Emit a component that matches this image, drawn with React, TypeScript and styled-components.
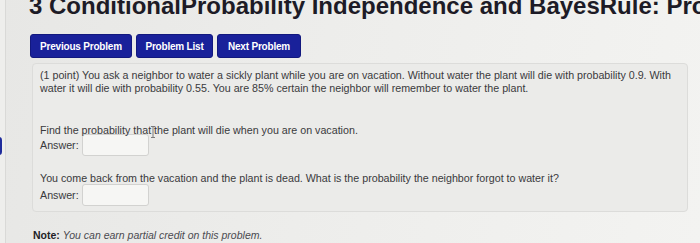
import React from "react";
import styled, { createGlobalStyle } from "styled-components";

const Global = createGlobalStyle`
  html, body { margin: 0; padding: 0; }
  body {
    width: 700px;
    height: 243px;
    overflow: hidden;
    font-family: "Liberation Sans", Arial, sans-serif;
    background: linear-gradient(100deg, #e7e7e5 0%, #ededeb 45%, #f3f3f1 100%);
  }
`;

const Page = styled.div`
  display: flex;
  width: 700px;
  height: 243px;
  overflow: hidden;
  position: relative;
`;

const Sidebar = styled.div`
  width: 6px;
  flex: none;
  border-right: 1px solid #d9d9d7;
  background: #eeeeec;
  padding-top: 137px;
  box-sizing: border-box;
`;

const SideTab = styled.div`
  width: 3px;
  height: 18px;
  margin-left: -1px;
  background: #1f2c9c;
  border-radius: 0 3px 3px 0;
`;

const Main = styled.div`
  flex: 1;
  padding-left: 23px;
  min-width: 0;
`;

const Title = styled.h1`
  margin: -7px 0 0 0;
  font-size: 24px;
  line-height: 25px;
  font-weight: 700;
  color: #1d1b26;
  white-space: nowrap;
`;

const ButtonRow = styled.div`
  display: flex;
  gap: 4px;
  margin-top: 16px;
  margin-left: 1px;
`;

const NavButton = styled.button<{ $w: number }>`
  width: ${(p) => p.$w}px;
  height: 24px;
  padding: 0;
  background: #19219a;
  color: #ffffff;
  border: 1px solid #12187e;
  border-radius: 3px;
  font-family: "Liberation Sans", Arial, sans-serif;
  font-size: 10px;
  font-weight: 700;
  letter-spacing: -0.2px;
`;

const Panel = styled.div`
  margin-top: 5px;
  margin-left: 3px;
  width: 656px;
  box-sizing: border-box;
  padding: 5px 7px 5px 7px;
  background: #ebebe9;
  border: 1px solid #dcdcda;
  border-radius: 4px;
  color: #3a3a3c;
  font-size: 10.7px;
  line-height: 13px;
  white-space: nowrap;
`;

const Para = styled.p<{ $top: number }>`
  position: relative;
  z-index: 1;
  margin: ${(p) => p.$top}px 0 0 0;
`;

const AnswerRow = styled.div<{ $top: number }>`
  display: flex;
  align-items: center;
  gap: 3px;
  margin-top: ${(p) => p.$top}px;
`;

const AnswerBox = styled.div`
  width: 67px;
  height: 22px;
  box-sizing: border-box;
  background: #f6f6f4;
  border: 1px solid #d2d2d0;
  border-radius: 3px;
`;

const Cursor = styled.svg`
  position: absolute;
  left: 150px;
  top: 126px;
  z-index: 2;
`;

const Note = styled.div`
  margin-top: 17px;
  margin-left: 4px;
  font-size: 10.5px;
  line-height: 13px;
  color: #222226;
  white-space: nowrap;
  b { font-weight: 700; }
  i { color: #4a4a50; }
`;

export default function App() {
  return (
    <>
      <Global />
      <Page>
        <Sidebar>
          <SideTab />
        </Sidebar>
        <Main>
          <Title>3 ConditionalProbability Independence and BayesRule: Problem 3</Title>
          <ButtonRow>
            <NavButton $w={102}>Previous Problem</NavButton>
            <NavButton $w={77}>Problem List</NavButton>
            <NavButton $w={84}>Next Problem</NavButton>
          </ButtonRow>
          <Panel>
            <Para $top={0}>
              (1 point) You ask a neighbor to water a sickly plant while you are on vacation. Without water the plant will die with probability 0.9. With
              <br />
              water it will die with probability 0.55. You are 85% certain the neighbor will remember to water the plant.
            </Para>
            <Para $top={29}>Find the probability that the plant will die when you are on vacation.</Para>
            <AnswerRow $top={-3}>
              <span>Answer:</span>
              <AnswerBox />
            </AnswerRow>
            <Para $top={16}>You come back from the vacation and the plant is dead. What is the probability the neighbor forgot to water it?</Para>
            <AnswerRow $top={-1}>
              <span>Answer:</span>
              <AnswerBox />
            </AnswerRow>
          </Panel>
          <Note>
            <b>Note:</b> <i>You can earn partial credit on this problem.</i>
          </Note>
        </Main>
        <Cursor width="6" height="12" viewBox="0 0 6 12">
          <path d="M1 0.5 H5 M3 0.5 V11.5 M1 11.5 H5" stroke="#7a7a7a" strokeWidth="1" fill="none" />
        </Cursor>
      </Page>
    </>
  );
}
